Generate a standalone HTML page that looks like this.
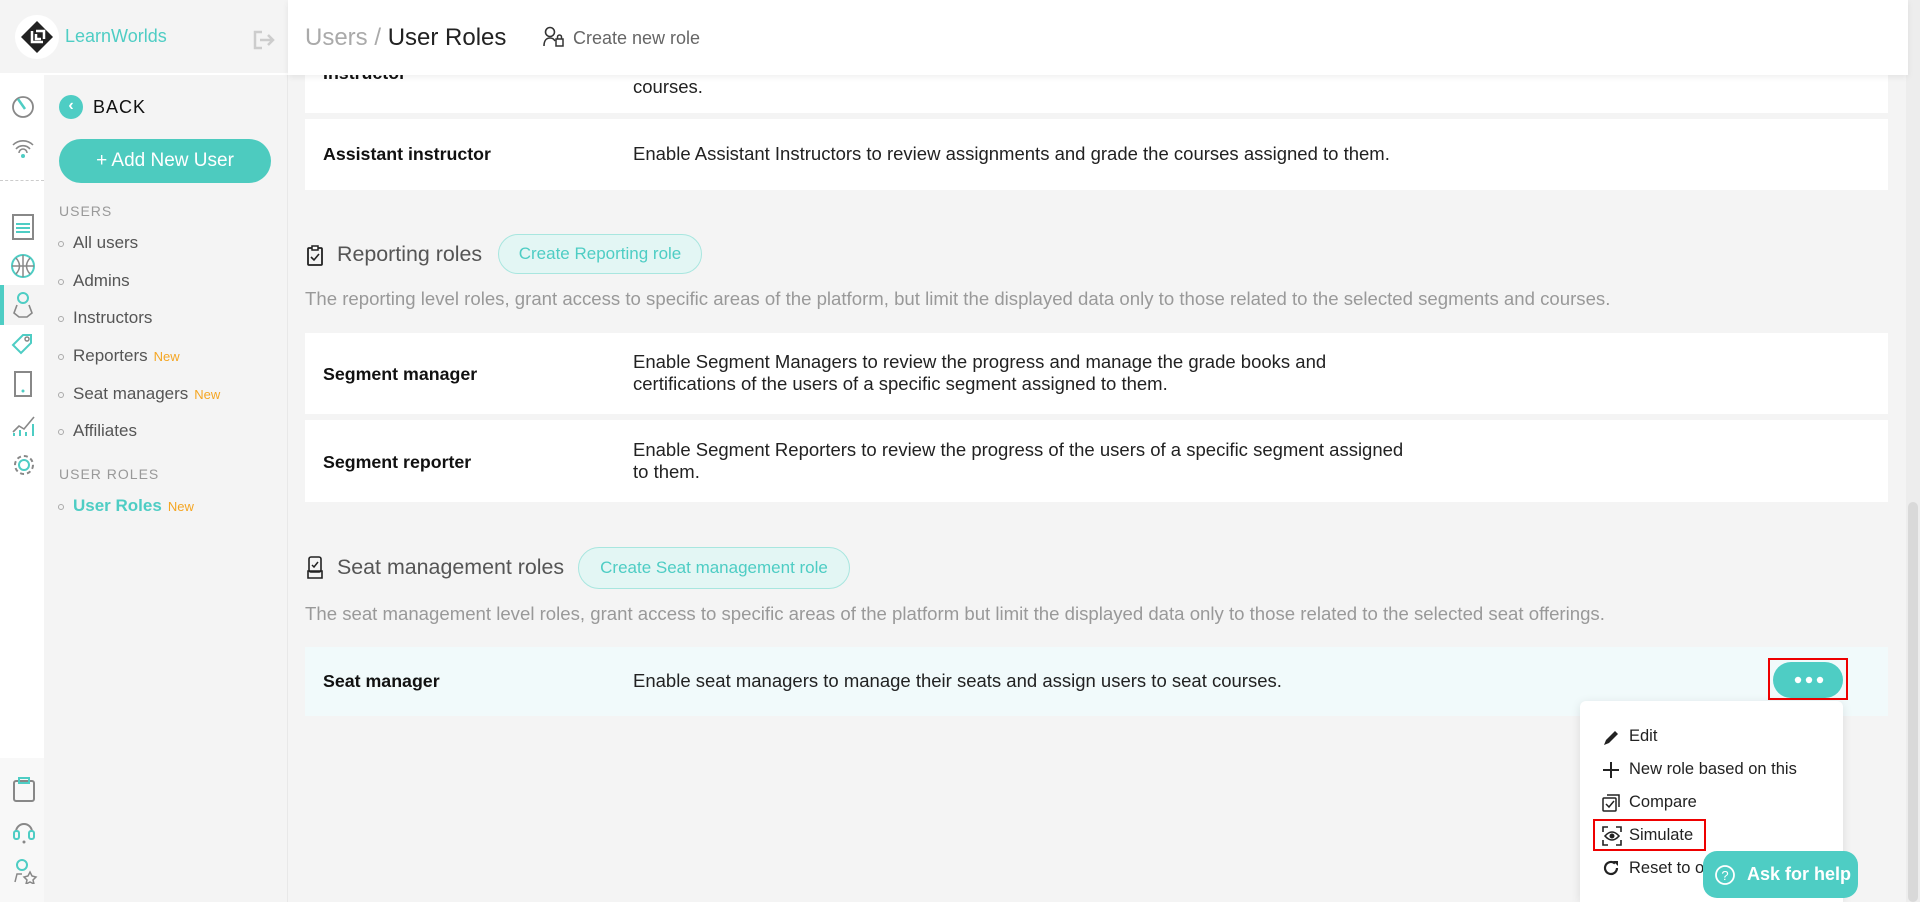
<!DOCTYPE html>
<html style="width:1920px;height:902px;overflow:hidden"><head><meta charset="utf-8"><style>
*{box-sizing:border-box;margin:0;padding:0}
body{width:1920px;height:902px;overflow:hidden;background:#f4f4f4;font-family:"Liberation Sans",sans-serif;position:relative;color:#222}
.abs{position:absolute;white-space:nowrap}
.rail{left:0;top:75px;width:44px;height:827px;background:#fff}
.side{left:44px;top:75px;width:244px;height:827px;background:#f4f4f4;border-right:1px solid #e8e8e8}
.logo{left:0;top:0;width:288px;height:75px;background:#f4f4f4;border-bottom:2px solid #fff}
.hdr{left:288px;top:0;width:1620px;height:75px;background:#fff;box-shadow:0 2px 6px rgba(0,0,0,.07);z-index:3}
.card{left:305px;width:1583px;background:#fff}
.name{position:absolute;left:18px;font-weight:bold;font-size:17.8px;color:#111;white-space:nowrap}
.desc{position:absolute;left:328px;font-size:18.5px;color:#222;line-height:22px;white-space:nowrap}
.nav{position:absolute;left:73px;font-size:17px;color:#555;white-space:nowrap}
.dot{position:absolute;left:58px;width:6px;height:6px;border:1px solid #aaa;border-radius:50%}
.new{color:#f5a623;font-size:13px;margin-left:6px}
.sec{font-size:14px;color:#999;letter-spacing:1px;position:absolute;left:59px;white-space:nowrap}
.pill{border:1px solid #a8e6df;background:#e3f6f4;color:#4ecdc4;border-radius:22px;font-size:17px;display:flex;align-items:center;justify-content:center}
.h{font-size:21.4px;color:#555}
.gd{font-size:18.6px;color:#999;left:305px}
.mi{position:absolute;left:49px;font-size:16.5px;color:#222;white-space:nowrap}
</style></head><body>
<div class="abs logo">
 <div class="abs" style="left:15px;top:15px;width:44px;height:44px;border-radius:50%;background:#fff"></div>
 <svg class="abs" style="left:19px;top:19px" width="36" height="36" viewBox="0 0 36 36"><path d="M18 2 L34 18 L18 34 L2 18Z" fill="#222"/><path d="M13 12 v11 h11 M17 15 v5 h5 M17 12 h8 v8" stroke="#fff" stroke-width="2.5" fill="none"/></svg>
 <div class="abs" style="left:65px;top:26px;font-size:18px;color:#4ecdc4">LearnWorlds</div>
 <svg class="abs" style="left:252px;top:30px" width="24" height="20" viewBox="0 0 24 20"><path d="M10 2H3v16h7" stroke="#ccc" stroke-width="2.5" fill="none"/><path d="M8 10h12M16 5l5 5-5 5" stroke="#ccc" stroke-width="2.5" fill="none"/></svg>
</div>
<div class="abs rail">
 <svg class="abs" style="left:11px;top:20px" width="24" height="24"><circle cx="12" cy="12" r="10" fill="none" stroke="#888" stroke-width="1.8"/><path d="M7 4l7 10" stroke="#4ecdc4" stroke-width="2.5"/></svg>
 <svg class="abs" style="left:11px;top:62px" width="24" height="22"><path d="M2 8a14 14 0 0 1 20 0M5 12a9 9 0 0 1 14 0M8 16a4 4 0 0 1 8 0" stroke="#888" stroke-width="1.6" fill="none"/><circle cx="12" cy="19" r="2" fill="#4ecdc4"/></svg>
 <div class="abs" style="left:0;top:105px;width:44px;border-top:1px dashed #ccc"></div>
 <svg class="abs" style="left:12px;top:139px" width="22" height="26"><rect x="1" y="1" width="20" height="24" fill="none" stroke="#888" stroke-width="2"/><path d="M4 10h14M4 14h14M4 18h14" stroke="#4ecdc4" stroke-width="2"/></svg>
 <svg class="abs" style="left:10px;top:178px" width="26" height="26"><circle cx="13" cy="13" r="11" fill="none" stroke="#4ecdc4" stroke-width="2"/><path d="M2 13h22M13 2v22M6 5q7 8 0 16M20 5q-7 8 0 16" stroke="#888" stroke-width="1.5" fill="none"/></svg>
 <div class="abs" style="left:0;top:210px;width:44px;height:40px;background:#f4f4f4"></div>
 <div class="abs" style="left:0;top:210px;width:4px;height:40px;background:#4ecdc4"></div>
 <svg class="abs" style="left:13px;top:216px" width="20" height="28"><circle cx="10" cy="7" r="5" fill="none" stroke="#4ecdc4" stroke-width="2"/><path d="M4 14l-3 8 5 4h8l5-4-3-8" fill="none" stroke="#888" stroke-width="1.6"/></svg>
 <svg class="abs" style="left:10px;top:256px" width="26" height="26"><path d="M3 14l10-10h8v8L11 22z" fill="none" stroke="#4ecdc4" stroke-width="2"/><circle cx="17" cy="8" r="2" fill="none" stroke="#888" stroke-width="1.5"/></svg>
 <svg class="abs" style="left:14px;top:296px" width="18" height="26"><rect x="1" y="1" width="16" height="24" fill="none" stroke="#888" stroke-width="2"/><circle cx="9" cy="20" r="1.5" fill="#4ecdc4"/></svg>
 <svg class="abs" style="left:11px;top:337px" width="26" height="26"><path d="M2 20l6-6 5 3 10-12" fill="none" stroke="#888" stroke-width="1.6"/><path d="M3 24v-3M9 24v-6M15 24v-4M22 24v-12" stroke="#4ecdc4" stroke-width="2"/></svg>
 <svg class="abs" style="left:12px;top:378px" width="24" height="24"><circle cx="12" cy="12" r="5" fill="none" stroke="#4ecdc4" stroke-width="2"/><circle cx="12" cy="12" r="9" fill="none" stroke="#888" stroke-width="2" stroke-dasharray="4 3"/></svg>
 <div class="abs" style="left:0;top:683px;width:44px;height:144px;background:#f8f8f8"></div>
 <svg class="abs" style="left:12px;top:702px" width="24" height="26"><rect x="2" y="4" width="20" height="20" rx="2" fill="none" stroke="#888" stroke-width="2"/><rect x="7" y="1" width="10" height="5" fill="none" stroke="#4ecdc4" stroke-width="2"/></svg>
 <svg class="abs" style="left:12px;top:743px" width="24" height="26"><path d="M4 14a8 8 0 0 1 16 0" fill="none" stroke="#888" stroke-width="2"/><rect x="2" y="13" width="5" height="8" rx="2" fill="none" stroke="#4ecdc4" stroke-width="2"/><rect x="17" y="13" width="5" height="8" rx="2" fill="none" stroke="#4ecdc4" stroke-width="2"/><circle cx="12" cy="24" r="1.5" fill="#888"/></svg>
 <svg class="abs" style="left:12px;top:783px" width="26" height="26"><circle cx="10" cy="7" r="5" fill="none" stroke="#4ecdc4" stroke-width="2"/><path d="M3 24l2-8h5M18 14l2 4 4 1-3 3 1 4-4-2-4 2 1-4-3-3 4-1z" fill="none" stroke="#888" stroke-width="1.5"/></svg>
</div>
<div class="abs side">
 <div class="abs" style="left:15px;top:20px;width:24px;height:24px;border-radius:50%;background:#4ecdc4;color:#fff;font-size:16px;text-align:center;line-height:22px;font-weight:bold">‹</div>
 <div class="abs" style="left:49px;top:22px;font-size:18px;letter-spacing:1px;color:#111">BACK</div>
 <div class="abs" style="left:15px;top:64px;width:212px;height:44px;border-radius:22px;background:#4dcbbf;color:#fff;font-size:19px;text-align:center;line-height:44px">+ Add New User</div>
</div>
<div class="abs" style="left:0;top:0;width:288px">
 <div class="sec" style="top:203px">USERS</div>
 <div class="dot" style="top:241px"></div><div class="nav" style="top:233px">All users</div>
 <div class="dot" style="top:279px"></div><div class="nav" style="top:271px">Admins</div>
 <div class="dot" style="top:316px"></div><div class="nav" style="top:308px">Instructors</div>
 <div class="dot" style="top:354px"></div><div class="nav" style="top:346px">Reporters<span class="new">New</span></div>
 <div class="dot" style="top:392px"></div><div class="nav" style="top:384px">Seat managers<span class="new">New</span></div>
 <div class="dot" style="top:429px"></div><div class="nav" style="top:421px">Affiliates</div>
 <div class="sec" style="top:466px">USER ROLES</div>
 <div class="dot" style="top:504px"></div><div class="nav" style="top:496px;color:#4ecdc4;font-weight:bold">User Roles<span class="new" style="font-weight:normal">New</span></div>
</div>
<div class="abs hdr">
 <div class="abs" style="left:17px;top:24px;font-size:24px;color:#aaa">Users / <span style="color:#222">User Roles</span></div>
 <svg class="abs" style="left:255px;top:26px" width="22" height="22"><circle cx="7" cy="6" r="4.5" fill="none" stroke="#333" stroke-width="1.6"/><path d="M1 20c0-6 3-8 6-8 2 0 4 1 5 3" fill="none" stroke="#333" stroke-width="1.6"/><rect x="13" y="13" width="7" height="7" fill="none" stroke="#333" stroke-width="1.5"/><path d="M14.5 13v-2a2 2 0 0 1 4 0v2" fill="none" stroke="#333" stroke-width="1.5"/></svg>
 <div class="abs" style="left:285px;top:28px;font-size:18px;color:#666">Create new role</div>
</div>
<div class="abs card" style="top:40px;height:73px"><div class="name" style="top:23px">Instructor</div><div class="desc" style="top:36px">courses.</div></div>
<div class="abs card" style="top:119px;height:71px"><div class="name" style="top:25px">Assistant instructor</div><div class="desc" style="top:24px">Enable Assistant Instructors to review assignments and grade the courses assigned to them.</div></div>
<svg class="abs" style="left:307px;top:245px" width="16" height="21"><rect x="1" y="3" width="14" height="17" rx="1" fill="none" stroke="#222" stroke-width="1.8"/><rect x="5" y="1" width="6" height="4" fill="#fff" stroke="#222" stroke-width="1.5"/><path d="M4 12l3 3 5-6" fill="none" stroke="#222" stroke-width="1.6"/></svg>
<div class="abs h" style="left:337px;top:242px">Reporting roles</div>
<div class="abs pill" style="left:498px;top:234px;width:204px;height:40px">Create Reporting role</div>
<div class="abs gd" style="top:288px">The reporting level roles, grant access to specific areas of the platform, but limit the displayed data only to those related to the selected segments and courses.</div>
<div class="abs card" style="top:333px;height:81px"><div class="name" style="top:31px">Segment manager</div><div class="desc" style="top:18px">Enable Segment Managers to review the progress and manage the grade books and<br>certifications of the users of a specific segment assigned to them.</div></div>
<div class="abs card" style="top:420px;height:82px"><div class="name" style="top:32px">Segment reporter</div><div class="desc" style="top:19px">Enable Segment Reporters to review the progress of the users of a specific segment assigned<br>to them.</div></div>
<svg class="abs" style="left:307px;top:556px" width="16" height="23"><rect x="2" y="1" width="12" height="15" rx="2" fill="none" stroke="#222" stroke-width="1.6"/><path d="M1 15h14v7H1z" fill="none" stroke="#222" stroke-width="1.6"/><path d="M5 9l2 2 4-5" fill="none" stroke="#222" stroke-width="1.5"/></svg>
<div class="abs h" style="left:337px;top:555px">Seat management roles</div>
<div class="abs pill" style="left:578px;top:547px;width:272px;height:42px">Create Seat management role</div>
<div class="abs gd" style="top:603px">The seat management level roles, grant access to specific areas of the platform but limit the displayed data only to those related to the selected seat offerings.</div>
<div class="abs card" style="top:647px;height:69px;background:#f1fafb"><div class="name" style="top:24px">Seat manager</div><div class="desc" style="top:23px">Enable seat managers to manage their seats and assign users to seat courses.</div></div>
<div class="abs" style="left:1768px;top:658px;width:80px;height:42px;border:2px solid #e00"></div>
<div class="abs" style="left:1773px;top:662px;width:70px;height:36px;border-radius:18px;background:#4ecdc4"></div>
<svg class="abs" style="left:1794px;top:675px" width="30" height="10"><circle cx="4" cy="5" r="3.2" fill="#fff"/><circle cx="15" cy="5" r="3.2" fill="#fff"/><circle cx="26" cy="5" r="3.2" fill="#fff"/></svg>
<div class="abs" style="left:1580px;top:701px;width:263px;height:201px;background:#fff;border-radius:6px 6px 0 0;box-shadow:0 2px 10px rgba(0,0,0,.1);overflow:hidden">
 <svg class="abs" style="left:22px;top:28px" width="18" height="18"><path d="M2 16l2-5 9-9 3 3-9 9z" fill="#222"/></svg>
 <div class="mi" style="top:26px">Edit</div>
 <svg class="abs" style="left:22px;top:60px" width="18" height="18"><path d="M9 1v16M1 9h16" stroke="#222" stroke-width="2"/></svg>
 <div class="mi" style="top:59px">New role based on this</div>
 <svg class="abs" style="left:22px;top:92px" width="20" height="20"><rect x="1" y="5" width="13" height="13" rx="1" fill="none" stroke="#222" stroke-width="1.5"/><path d="M5 2h12v12" fill="none" stroke="#222" stroke-width="1.5"/><path d="M4 11l3 3 5-6" fill="none" stroke="#222" stroke-width="1.5"/></svg>
 <div class="mi" style="top:92px">Compare</div>
 <svg class="abs" style="left:22px;top:125px" width="20" height="20"><path d="M1 6V1h5M14 1h5v5M19 14v5h-5M6 19H1v-5" fill="none" stroke="#222" stroke-width="1.6"/><path d="M3 10q7-8 14 0q-7 8-14 0z" fill="none" stroke="#222" stroke-width="1.6"/><circle cx="10" cy="10" r="2.5" fill="#222"/></svg>
 <div class="mi" style="top:125px">Simulate</div>
 <svg class="abs" style="left:22px;top:158px" width="18" height="18"><path d="M15 9a6 6 0 1 1-2-4.5" fill="none" stroke="#222" stroke-width="2.2"/><path d="M11 2h5v5z" fill="#222"/></svg>
 <div class="mi" style="top:158px">Reset to o</div>
</div>
<div class="abs" style="left:1593px;top:819px;width:113px;height:32px;border:2px solid #e00"></div>
<div class="abs" style="left:1703px;top:851px;width:155px;height:47px;border-radius:14px;background:#4ecdc4;color:#fff;font-weight:bold;font-size:18px;line-height:47px;padding-left:44px">Ask for help</div>
<svg class="abs" style="left:1714px;top:864px" width="22" height="22"><circle cx="11" cy="11" r="9" fill="none" stroke="#fff" stroke-width="1.8"/><text x="11" y="16" font-size="13" fill="#fff" text-anchor="middle" font-family="Liberation Sans">?</text></svg>
<div class="abs" style="left:1906px;top:0;width:14px;height:902px;background:#ededed"></div>
<div class="abs" style="left:1908px;top:502px;width:10px;height:400px;background:#d9d9d9;border-radius:5px"></div>
</body></html>
